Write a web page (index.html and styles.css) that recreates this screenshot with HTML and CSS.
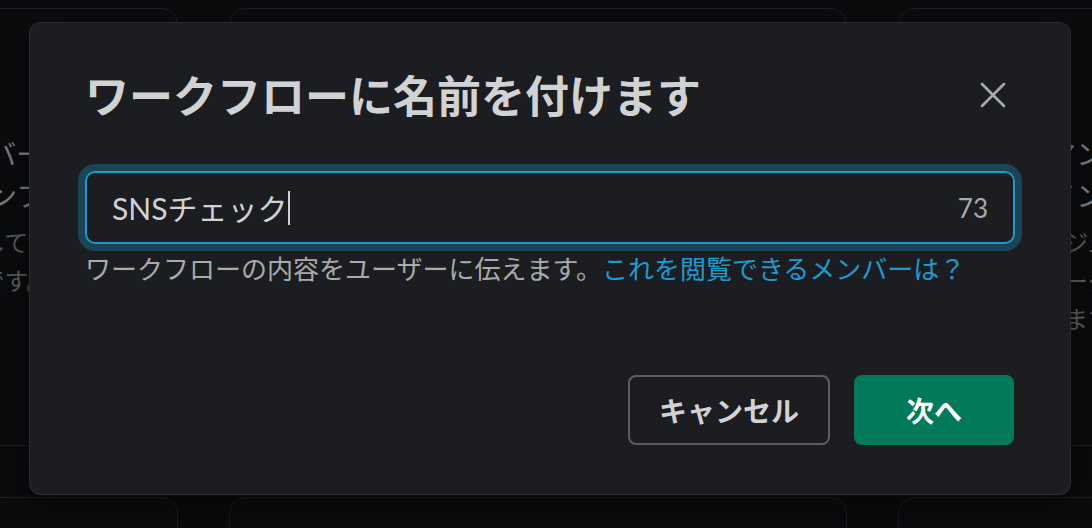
FILE: index.html
```html
<!DOCTYPE html>
<html lang="ja">
<head>
<meta charset="utf-8">
<title>ワークフローに名前を付けます</title>
<link rel="stylesheet" href="styles.css">
</head>
<body>
<div class="page">
  <div class="cards">
    <div class="card">
      <div class="card-title">新しく参加したチャンネルメンバーへ</div>
      <div class="card-title">参加時に自動で歓迎文を送るインフォ</div>
      <div class="card-desc">このワークフローは新規参加を検知して</div>
      <div class="card-desc">歓迎メッセージを自動送信する機能です。</div>
    </div>
    <div class="card"></div>
    <div class="card card-right">
      <div class="card-title">月のマンスリー</div>
      <div class="card-title">的にインプット</div>
      <div class="card-desc">のスケジュール</div>
      <div class="card-desc">部署リーダー</div>
      <div class="card-desc">通知します。</div>
    </div>
    <div class="card"></div>
    <div class="card"></div>
    <div class="card"></div>
  </div>
</div>

<div class="modal" role="dialog" aria-labelledby="modal-title">
  <div class="modal-header">
    <h1 class="modal-title" id="modal-title">ワークフローに名前を付けます</h1>
    <button class="close" aria-label="閉じる">
      <svg width="26" height="26" viewBox="0 0 26 26" aria-hidden="true">
        <path d="M2 2 L24 24 M24 2 L2 24" stroke="#a9aaac" stroke-width="2.6" stroke-linecap="round" fill="none"/>
      </svg>
    </button>
  </div>
  <div class="input">
    <span class="input-value">SNSチェック</span><span class="caret"></span>
    <span class="counter">73</span>
  </div>
  <p class="hint">ワークフローの内容をユーザーに伝えます。<a class="link" href="#">これを閲覧できるメンバーは？</a></p>
  <div class="footer">
    <button class="btn btn-cancel">キャンセル</button>
    <button class="btn btn-next">次へ</button>
  </div>
</div>
</body>
</html>
```

FILE: styles.css
```css
html, body {
  margin: 0;
  padding: 0;
}
body {
  width: 1092px;
  height: 528px;
  overflow: hidden;
  background: #0a0b0d;
  font-family: Lato, "Noto Sans CJK JP", sans-serif;
  position: relative;
}
.page {
  height: 528px;
  overflow: hidden;
}
.cards {
  display: grid;
  grid-template-columns: repeat(3, 618px);
  grid-auto-rows: 438px;
  column-gap: 51px;
  row-gap: 51px;
  margin-left: -440px;
  padding-top: 8px;
}
.card {
  border: 1px solid #1d1f23;
  border-radius: 16px;
  background: #0b0c0e;
  padding: 123px 30px 0 36px;
  overflow: hidden;
  font-family: "Noto Sans CJK JP", sans-serif;
}
.card-right {
  padding-left: 93px;
}
.card-title {
  font-size: 28px;
  line-height: 42px;
  color: #808184;
  white-space: nowrap;
}
.card-title + .card-desc {
  margin-top: 7px;
}
.card-desc {
  font-size: 24px;
  line-height: 38px;
  color: #5e5f62;
  white-space: nowrap;
}

.modal {
  position: absolute;
  left: 29px;
  top: 22px;
  width: 1042px;
  height: 473px;
  box-sizing: border-box;
  background: #1b1d21;
  border: 1px solid #2a2c30;
  border-bottom-color: #313236;
  border-radius: 12px;
  box-shadow: 0 16px 48px rgba(0, 0, 0, 0.45);
  padding: 36px 55px 49px 55px;
  display: flex;
  flex-direction: column;
}
.modal-header {
  display: flex;
  align-items: center;
  justify-content: space-between;
}
.modal-title {
  margin: 0;
  font-family: "Noto Sans CJK JP", sans-serif;
  font-weight: 700;
  font-size: 44px;
  line-height: 70px;
  color: #d1d2d3;
  letter-spacing: 0;
}
.close {
  width: 42px;
  height: 42px;
  padding: 0;
  margin-top: 2px;
  margin-right: 1px;
  border: none;
  background: transparent;
  display: flex;
  align-items: center;
  justify-content: center;
}
.input {
  margin-top: 42px;
  height: 73px;
  box-sizing: border-box;
  border: 2px solid #1d9bd1;
  border-radius: 10px;
  box-shadow: 0 0 0 7px #1b4457;
  padding: 0 25px;
  display: flex;
  align-items: center;
}
.input-value {
  font-size: 30px;
  color: #d1d2d3;
  line-height: 40px;
}
.caret {
  width: 2px;
  height: 34px;
  background: #d1d2d3;
  margin-left: 1px;
}
.counter {
  margin-left: auto;
  font-size: 26px;
  color: #a9aaac;
}
.hint {
  margin: 6px 0 0 0;
  font-family: "Noto Sans CJK JP", sans-serif;
  font-size: 26px;
  line-height: 36px;
  color: #a9aaac;
  white-space: nowrap;
}
.link {
  color: #1d9bd1;
  text-decoration: none;
}
.footer {
  margin-top: auto;
  display: flex;
  justify-content: flex-end;
  gap: 24px;
  padding-right: 1px;
}
.btn {
  height: 70px;
  box-sizing: border-box;
  border-radius: 8px;
  font-family: "Noto Sans CJK JP", sans-serif;
  font-weight: 700;
  font-size: 28px;
  padding: 0;
  cursor: pointer;
}
.btn-cancel {
  width: 202px;
  background: transparent;
  border: 2px solid #5b5d61;
  color: #d1d2d3;
}
.btn-next {
  width: 160px;
  background: #007a5a;
  border: none;
  color: #ffffff;
}
```
